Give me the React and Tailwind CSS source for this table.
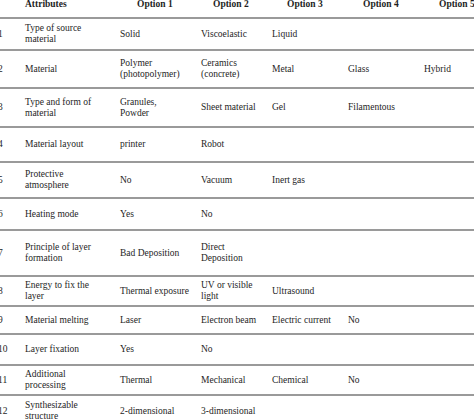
const cols = ['w-[27px] -ml-[2px]', 'w-[95px]', 'w-[81px]', 'w-[71px]', 'w-[76px]', 'w-[76px]', 'w-[60px]'];

const headers = [
    { text: '', pad: '' },
    { text: 'Attributes', pad: '' },
    { text: 'Option 1', pad: 'pl-[17px]' },
    { text: 'Option 2', pad: 'pl-[12px]' },
    { text: 'Option 3', pad: 'pl-[15px]' },
    { text: 'Option 4', pad: 'pl-[15px]' },
    { text: 'Option 5', pad: 'pl-[15px]' },
];

const rows = [
    { h: 'h-[30px]', cells: ['1', ['Type of source', 'material'], 'Solid', 'Viscoelastic', 'Liquid'] },
    { h: 'h-[36px]', cells: ['2', 'Material', ['Polymer', '(photopolymer)'], ['Ceramics', '(concrete)'], 'Metal', 'Glass', 'Hybrid'] },
    { h: 'h-[37px]', cells: ['3', ['Type and form of', 'material'], ['Granules,', 'Powder'], 'Sheet material', 'Gel', 'Filamentous'] },
    { h: 'h-[33px]', cells: ['4', 'Material layout', 'printer', 'Robot'] },
    { h: 'h-[34px]', cells: ['5', ['Protective', 'atmosphere'], 'No', 'Vacuum', 'Inert gas'] },
    { h: 'h-[30px]', cells: ['6', 'Heating mode', 'Yes', 'No'] },
    { h: 'h-[44px]', cells: ['7', ['Principle of layer', 'formation'], 'Bad Deposition', ['Direct', 'Deposition']] },
    { h: 'h-[28px]', cells: ['8', ['Energy to fix the', 'layer'], 'Thermal exposure', ['UV or visible', 'light'], 'Ultrasound'] },
    { h: 'h-[26px]', cells: ['9', 'Material melting', 'Laser', 'Electron beam', 'Electric current', 'No'] },
    { h: 'h-[29px]', cells: ['10', 'Layer fixation', 'Yes', 'No'] },
    { h: 'h-[28px]', cells: ['11', ['Additional', 'processing'], 'Thermal', 'Mechanical', 'Chemical', 'No'] },
    { h: 'h-[30px]', cells: ['12', ['Synthesizable', 'structure'], '2-dimensional', '3-dimensional'] },
];

function Cell({ value, col }) {
    const lines = Array.isArray(value) ? value : [value];
    return (
        <div className={`${cols[col]} shrink-0 flex flex-col justify-center whitespace-nowrap`}>
            {lines.map((l, i) => <span key={i}>{l}</span>)}
        </div>
    );
}

function Rule() {
    return <div className="h-[2px] w-full bg-[#9a9a9a]" />;
}

export default function App() {
    return (
        <div className="w-[474px] h-[420px] overflow-hidden bg-white text-[#1e1e1e] text-[9.5px] leading-[11px]"
            style={{ fontFamily: '"Liberation Serif", "Times New Roman", serif' }}>
            <div className="h-[17px] flex items-start font-bold">
                {headers.map((hd, i) => (
                    <div key={i} className={`${cols[i]} ${hd.pad} shrink-0 -mt-[1px] whitespace-nowrap`}>{hd.text}</div>
                ))}
            </div>
            {rows.map((r, ri) => (
                <div key={ri}>
                    <Rule />
                    <div className={`${r.h} flex`}>
                        {r.cells.map((c, ci) => <Cell key={ci} value={c} col={ci} />)}
                    </div>
                </div>
            ))}
        </div>
    );
}
